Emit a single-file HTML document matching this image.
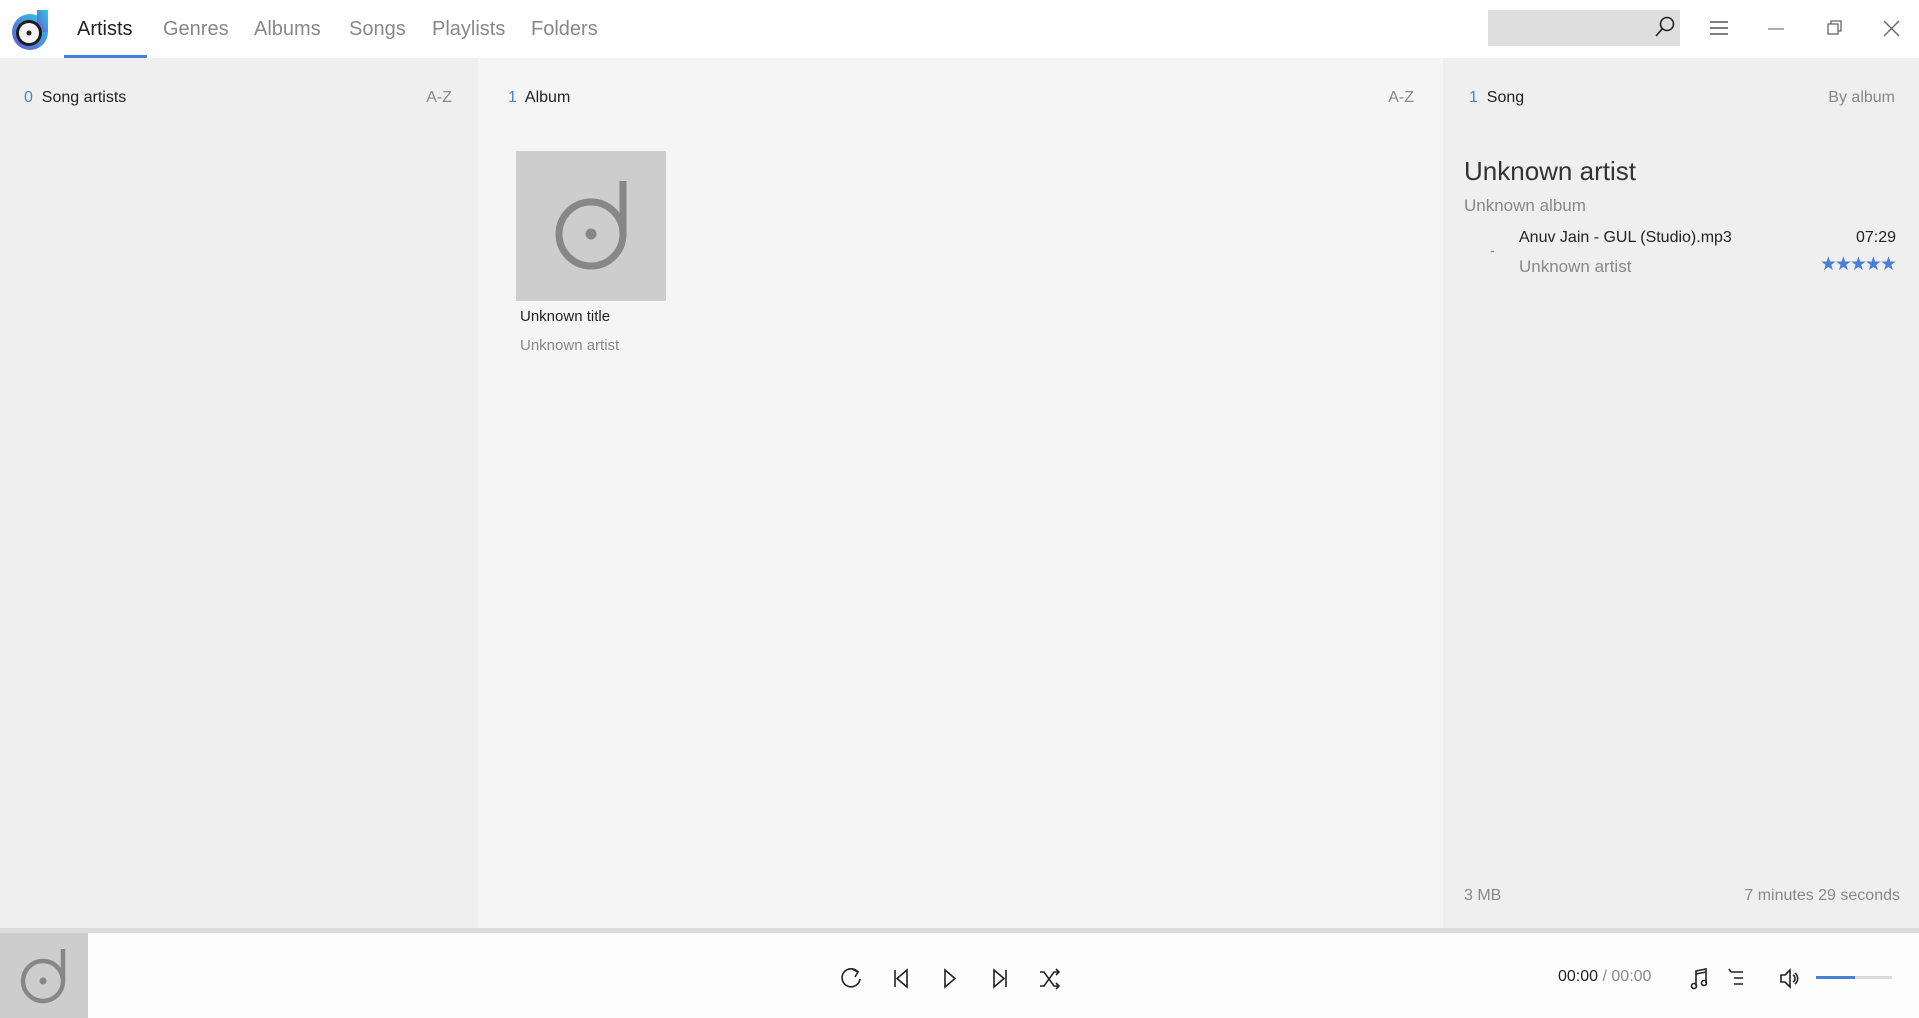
<!DOCTYPE html>
<html><head><meta charset="utf-8"><style>
*{margin:0;padding:0;box-sizing:border-box}
body{width:1919px;height:1018px;overflow:hidden;font-family:"Liberation Sans",sans-serif;background:#fff;position:relative;color:#222}
.a{position:absolute;white-space:nowrap}
.g{color:#888}
.b{color:#4a7fd8}
</style></head><body>
<!-- title bar -->
<div class="a" style="left:0;top:0;width:1919px;height:58px;background:#fff"></div>
<svg class="a" style="left:9px;top:9px" width="42" height="42" viewBox="0 0 42 42">
<defs><linearGradient id="lg" x1="0" y1="1" x2="1" y2="0"><stop offset="0" stop-color="#6a4fd8"/><stop offset="1" stop-color="#2ad0e0"/></linearGradient></defs>
<circle cx="21" cy="23" r="18" fill="url(#lg)"/>
<path d="M28 1 h11 v22 h-11z" fill="url(#lg)"/>
<circle cx="20" cy="24" r="13" fill="#1c1c1c"/><circle cx="20" cy="24" r="10" fill="#f4f4f4"/><circle cx="20" cy="24" r="2.5" fill="#222"/>
</svg>
<div class="a" style="left:77px;top:18px;font-size:20px;color:#222">Artists</div>
<div class="a g" style="left:163px;top:18px;font-size:20px">Genres</div>
<div class="a g" style="left:254px;top:18px;font-size:20px">Albums</div>
<div class="a g" style="left:349px;top:18px;font-size:20px">Songs</div>
<div class="a g" style="left:432px;top:18px;font-size:20px">Playlists</div>
<div class="a g" style="left:531px;top:18px;font-size:20px">Folders</div>
<div class="a" style="left:64px;top:55px;width:83px;height:3px;background:#4a7fd8"></div>
<div class="a" style="left:1488px;top:10px;width:192px;height:36px;background:#dedede"></div>
<svg class="a" style="left:1654px;top:15px" width="22" height="24" viewBox="0 0 22 24" fill="none" stroke="#222" stroke-width="1.6"><circle cx="13" cy="9" r="6.5"/><path d="M8.5 13.5 L2 21"/></svg>
<svg class="a" style="left:1708px;top:18px" width="22" height="20" stroke="#555" stroke-width="1.5"><path d="M2 4h18M2 10h18M2 16h18"/></svg>
<svg class="a" style="left:1767px;top:20px" width="20" height="20" stroke="#777" stroke-width="1.2"><path d="M1 9h16"/></svg>
<svg class="a" style="left:1825px;top:18px" width="20" height="20" fill="none" stroke="#666" stroke-width="1.3"><rect x="3" y="6" width="10" height="10"/><path d="M6 6V3h10v10h-3"/></svg>
<svg class="a" style="left:1882px;top:19px" width="20" height="20" stroke="#666" stroke-width="1.4"><path d="M2 2l15 15M17 2L2 17"/></svg>
<!-- panes -->
<div class="a" style="left:0;top:58px;width:478px;height:870px;background:#efefef"></div>
<div class="a" style="left:478px;top:58px;width:965px;height:870px;background:#f5f5f5"></div>
<div class="a" style="left:1443px;top:58px;width:476px;height:870px;background:#efefef"></div>
<div class="a" style="left:0;top:928px;width:1919px;height:5px;background:#dcdcdc"></div>
<div class="a" style="left:0;top:933px;width:1919px;height:85px;background:#fdfdfd"></div>
<!-- headers -->
<div class="a" style="left:24px;top:89px;font-size:16px"><span class="b">0</span>&nbsp; Song artists</div>
<div class="a g" style="right:1467px;top:89px;font-size:16px">A-Z</div>
<div class="a" style="left:508px;top:89px;font-size:16px"><span class="b">1</span>&nbsp; Album</div>
<div class="a g" style="right:505px;top:89px;font-size:16px">A-Z</div>
<div class="a" style="left:1469px;top:89px;font-size:16px"><span class="b">1</span>&nbsp; Song</div>
<div class="a g" style="right:24px;top:89px;font-size:16px">By album</div>
<!-- album -->
<div class="a" style="left:516px;top:151px;width:150px;height:150px;background:#cdcdcd"></div>
<svg class="a" style="left:516px;top:151px" width="150" height="150" fill="none" stroke="#878787" stroke-width="7"><path d="M107 30 V83 A32 32 0 1 1 75 51 A32 32 0 0 1 107 83"/><circle cx="75" cy="83" r="5.5" fill="#878787" stroke="none"/></svg>
<div class="a" style="left:520px;top:308px;font-size:15px">Unknown title</div>
<div class="a g" style="left:520px;top:337px;font-size:15px">Unknown artist</div>
<!-- right pane -->
<div class="a" style="left:1464px;top:156px;font-size:26px;color:#333">Unknown artist</div>
<div class="a g" style="left:1464px;top:196px;font-size:17px">Unknown album</div>
<div class="a b" style="left:1490px;top:242px;font-size:14px">-</div>
<div class="a" style="left:1519px;top:229px;font-size:16px">Anuv Jain - GUL (Studio).mp3</div>
<div class="a" style="right:23px;top:229px;font-size:16px">07:29</div>
<div class="a g" style="left:1519px;top:257px;font-size:17px">Unknown artist</div>
<div class="a b" style="right:24px;top:253px;font-size:19px;letter-spacing:-2px">★★★★★</div>
<div class="a g" style="left:1464px;top:887px;font-size:16px">3 MB</div>
<div class="a g" style="right:19px;top:887px;font-size:16px">7 minutes 29 seconds</div>
<!-- player -->
<div class="a" style="left:0;top:933px;width:88px;height:85px;background:#cdcdcd"></div>
<svg class="a" style="left:0;top:933px" width="88" height="85" fill="none" stroke="#878787" stroke-width="4.5"><path d="M63 16 V48 A20 20 0 1 1 43 28 A20 20 0 0 1 63 48"/><circle cx="43" cy="48" r="3.5" fill="#878787" stroke="none"/></svg>
<svg class="a" style="left:838px;top:966px" width="240" height="26" fill="none" stroke="#222" stroke-width="1.6">
<path d="M20 6 A9 9 0 1 0 22 13"/><path d="M14 3 L20 6 L17 11"/>
<path d="M57 4v17M69 4 L59 12.5 L69 21z"/>
<path d="M107 4 L117 12.5 L107 21z"/>
<path d="M156 4 L166 12.5 L156 21zM168 4v17"/>
<path d="M202 6h4l10 14h5M202 20h4l10-14h5M218 3l3 3-3 3M218 17l3 3-3 3"/>
</svg>
<div class="a" style="left:1558px;top:968px;font-size:16px"><span style="color:#222">00:00</span> <span class="g">/ 00:00</span></div>
<svg class="a" style="left:1689px;top:966px" width="120" height="26" fill="none" stroke="#222" stroke-width="1.6">
<path d="M7 20V5l10-2v14"/><circle cx="5" cy="20" r="2.5"/><circle cx="15" cy="17" r="2.5"/><path d="M7 8l10-2"/>
<path d="M42 6h12M45 12h9M45 18h9M40 3l2 3"/>
<path d="M92 9h4l5-5v17l-5-5h-4z"/><path d="M104 9a4 4 0 0 1 0 7M106 7a7 7 0 0 1 0 11"/>
</svg>
<div class="a" style="left:1816px;top:976px;width:76px;height:3px;background:#dcdcdc"></div>
<div class="a" style="left:1816px;top:976px;width:39px;height:3px;background:#4a7fd8"></div>
</body></html>
